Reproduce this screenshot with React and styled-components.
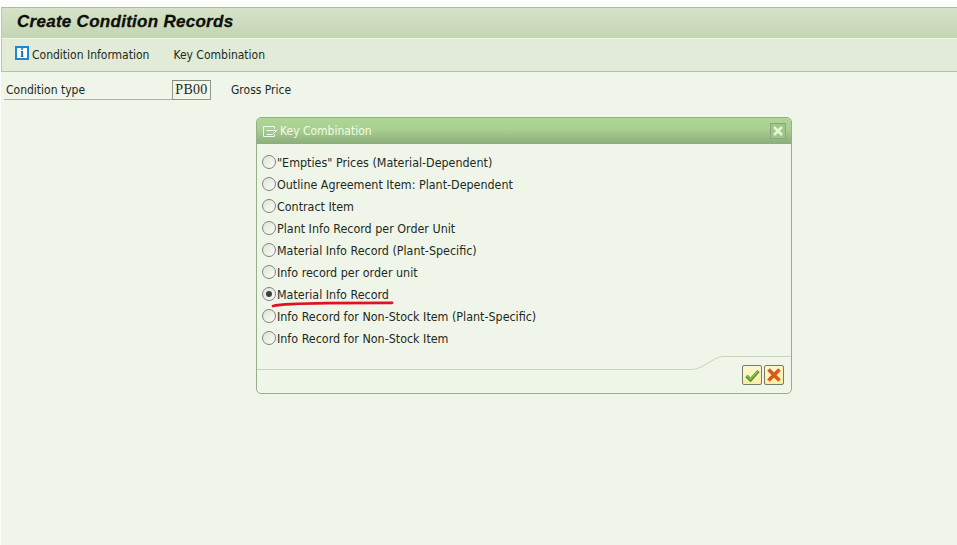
import React from 'react';
import styled, { createGlobalStyle } from 'styled-components';

const Global = createGlobalStyle`
  html, body { margin: 0; padding: 0; background: #fdfdfb; }
  body { font-family: "DejaVu Sans Condensed", "DejaVu Sans", sans-serif; font-stretch: condensed; font-size: 12px; color: #1c2a1c; }
`;

const Page = styled.div`
  position: relative;
  width: 957px;
  height: 545px;
  padding-top: 7px;
  box-sizing: border-box;
  overflow: hidden;
`;

const Frame = styled.div`
  margin-left: 1px;
  height: 538px;
  background: #f0f5ea;
  display: flex;
  flex-direction: column;
`;

const TitleBar = styled.div`
  height: 31px;
  flex: none;
  box-sizing: border-box;
  border-top: 1px solid #a9bd9e;
  border-left: 1px solid #b9c9b0;
  background: linear-gradient(#d6e3c8, #c3d5b3);
  display: flex;
  align-items: center;
  padding: 0 0 2px 15px;
`;

const Title = styled.h1`
  margin: 0;
  font-family: "Liberation Sans", sans-serif;
  font-stretch: normal;
  font-size: 17px;
  font-weight: bold;
  font-style: italic;
  color: #0d0f08;
  letter-spacing: 0.28px;
  -webkit-text-stroke: 0.3px #0d0f08;
`;

const Toolbar = styled.div`
  height: 34px;
  box-sizing: border-box;
  flex: none;
  background: #e2ead8;
  border-top: 1px solid #f2f6ec;
  border-bottom: 1px solid #b3c0a8;
  border-left: 1px solid #b9c9b0;
  display: flex;
  align-items: center;
  padding-left: 13px;
`;

const ToolButton = styled.span`
  display: flex;
  align-items: center;
  gap: 3px;
  margin-right: 24px;
  font-size: 12px;
`;

const InfoIcon = styled.span`
  width: 14px;
  height: 14px;
  box-sizing: border-box;
  background: #fff;
  border: 2px solid #1a88d6;
  color: #0a5fa8;
  font: bold 12px/10px "Liberation Serif", serif;
  text-align: center;
  margin-top: -4px;
`;

const FieldRow = styled.div`
  display: flex;
  align-items: center;
  height: 20px;
  margin-top: 8px;
  padding-left: 3px;
`;

const FieldLabel = styled.span`
  width: 168px;
  height: 20px;
  line-height: 21px;
  padding-left: 2px;
  box-sizing: border-box;
  border-bottom: 1px solid #a9b3a2;
  font-size: 12px;
`;

const FieldInput = styled.span`
  width: 39px;
  height: 20px;
  box-sizing: border-box;
  border: 1px solid #8f9a8a;
  border-top-color: #7d8878;
  background: #f2f6e9;
  font: 14px/18px "Liberation Serif", serif;
  font-stretch: normal;
  letter-spacing: 0.3px;
  text-align: center;
`;

const FieldText = styled.span`
  margin-left: 20px;
  font-size: 12px;
`;

const Dialog = styled.div`
  position: absolute;
  left: 256px;
  top: 117px;
  width: 536px;
  height: 277px;
  box-sizing: border-box;
  border: 1px solid #93b088;
  border-radius: 5px;
  background: #f0f5ea;
  display: flex;
  flex-direction: column;
  overflow: hidden;
`;

const DialogHeader = styled.div`
  height: 26px;
  flex: none;
  background: linear-gradient(#add595, #a9d191 40%, #8cad7b);
  display: flex;
  align-items: center;
  padding: 0 5px 0 5px;
  color: #f3f9ea;
  font-size: 12px;
  gap: 3px;
`;

const HeaderTitle = styled.span`
  flex: 1;
`;

const CloseButton = styled.span`
  width: 16px;
  height: 16px;
  box-sizing: border-box;
  border: 1px solid #8aa87c;
  background: #a0c48c;
  display: flex;
  align-items: center;
  justify-content: center;
`;

const OptionList = styled.div`
  flex: 1;
  padding-top: 7px;
  padding-left: 4px;
`;

const Option = styled.div`
  height: 22px;
  display: flex;
  align-items: center;
  gap: 1px;
  font-size: 12.4px;
`;

const Radio = styled.span`
  width: 14px;
  height: 14px;
  box-sizing: border-box;
  border-radius: 50%;
  border: 1px solid #7d8579;
  background: linear-gradient(135deg, #dfe3da, #fbfcf8);
  display: flex;
  align-items: center;
  justify-content: center;
  margin-left: 1px;
  &::after {
    content: '';
    width: 6px;
    height: 6px;
    border-radius: 50%;
    background: ${({ $on }) => ($on ? '#35463a' : 'transparent')};
  }
`;

const DialogFooter = styled.div`
  position: relative;
  height: 37px;
  flex: none;
  display: flex;
  justify-content: flex-end;
  align-items: flex-start;
  gap: 2px;
  padding: 9px 7px 0 0;
  box-sizing: border-box;
`;

const FooterCurve = styled.svg`
  position: absolute;
  left: 0;
  top: 0;
  width: 534px;
  height: 14px;
`;

const ActionButton = styled.span`
  position: relative;
  width: 20px;
  height: 20px;
  box-sizing: border-box;
  border: 1px solid #737b6c;
  border-radius: 2px;
  background: linear-gradient(#fdf7cf, #fdeea4);
  display: flex;
  align-items: center;
  justify-content: center;
`;

const Scribble = styled.svg`
  position: absolute;
  left: 270px;
  top: 296px;
  width: 126px;
  height: 12px;
`;

const options = [
  '"Empties" Prices (Material-Dependent)',
  'Outline Agreement Item: Plant-Dependent',
  'Contract Item',
  'Plant Info Record per Order Unit',
  'Material Info Record (Plant-Specific)',
  'Info record per order unit',
  'Material Info Record',
  'Info Record for Non-Stock Item (Plant-Specific)',
  'Info Record for Non-Stock Item',
];

export default function App() {
  return (
    <Page>
      <Global />
      <Frame>
        <TitleBar>
          <Title>Create Condition Records</Title>
        </TitleBar>
        <Toolbar>
          <ToolButton>
            <InfoIcon>i</InfoIcon>
            Condition Information
          </ToolButton>
          <ToolButton>Key Combination</ToolButton>
        </Toolbar>
        <FieldRow>
          <FieldLabel>Condition type</FieldLabel>
          <FieldInput>PB00</FieldInput>
          <FieldText>Gross Price</FieldText>
        </FieldRow>
      </Frame>

      <Dialog>
        <DialogHeader>
          <svg width="15" height="13" viewBox="0 0 15 13" fill="none" stroke="#f3f9ea" strokeWidth="1">
            <path d="M12.5 3.5V1.5H1.5V11.5H12.5V9.5" />
            <path d="M4.5 5.500H14.500L10.500 9.500H4.500" />
          </svg>
          <HeaderTitle>Key Combination</HeaderTitle>
          <CloseButton>
            <svg width="10" height="10" viewBox="0 0 10 10" stroke="#e4f8cf" strokeWidth="2.6">
              <path d="M1 1L9 9M9 1L1 9" />
            </svg>
          </CloseButton>
        </DialogHeader>
        <OptionList>
          {options.map((text, i) => (
            <Option key={text}>
              <Radio $on={i === 6} />
              {text}
            </Option>
          ))}
        </OptionList>
        <DialogFooter>
          <FooterCurve viewBox="0 0 534 14" fill="none">
            <path d="M0 13.5H435C443 13.5 451 6 459 2.500C463 0.500 465 0.500 469 0.500H534" stroke="#c6d4b9" />
          </FooterCurve>
          <ActionButton>
            <svg width="15" height="13" viewBox="0 0 15 13" fill="none">
              <path d="M1.500 7L5.500 11L13.500 2" stroke="#4d8f3c" strokeWidth="3.200" />
              <path d="M2 7L5.500 10.300L13 2" stroke="#8cc63f" strokeWidth="1.200" />
            </svg>
          </ActionButton>
          <ActionButton>
            <svg width="14" height="14" viewBox="0 0 14 14" stroke="#d9581c" strokeWidth="3.600">
              <path d="M1.500 1.500L12.500 12.500M12.500 1.500L1.500 12.500" />
            </svg>
          </ActionButton>
        </DialogFooter>
      </Dialog>

      <Scribble viewBox="0 0 126 12" fill="none">
        <path d="M3 10C12 8 30 7.500 57 7.200C80 7 102 7 122 6.800" stroke="#dd1420" strokeWidth="2.800" strokeLinecap="round" />
      </Scribble>
    </Page>
  );
}
